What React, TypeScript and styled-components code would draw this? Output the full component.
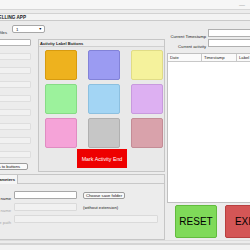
import React from "react";
import styled, { createGlobalStyle } from "styled-components";

const Global = createGlobalStyle`
  html, body { margin: 0; padding: 0; background: #ececec; }
  body { font-family: "Liberation Sans", Arial, sans-serif; }
  * { box-sizing: border-box; }
`;

const Screen = styled.div`
  width: 250px;
  height: 250px;
  overflow: hidden;
  background: #ececec;
  display: flex;
  flex-direction: column;
`;

const TopStrip = styled.div`
  height: 10px;
  flex: none;
  background: #f6f6f6;
  border-bottom: 1px solid #d6d6d6;
  display: flex;
  justify-content: flex-end;
  align-items: center;
  padding-right: 5px;
  color: #9a9a9a;
  font-size: 6px;
  line-height: 6px;
`;

const TitleRow = styled.div`
  margin-top: 3px;
  height: 8px;
  flex: none;
  background: #f3f3f3;
  border-top: 1px solid #d2d2d2;
  border-bottom: 1px solid #cacaca;
  display: flex;
  align-items: center;
  overflow: hidden;
`;

const TitleText = styled.span`
  margin-left: -33px;
  font-size: 4.6px;
  font-weight: bold;
  color: #222;
  white-space: nowrap;
`;

const Window = styled.div`
  margin-left: -40px;
  width: 330px;
  display: flex;
  flex: none;
`;

const LeftCol = styled.div`
  width: 205px;
  display: flex;
  flex-direction: column;
`;

const RightCol = styled.div`
  width: 125px;
  margin-left: 1px;
  display: flex;
  flex-direction: column;
`;

const SmallText = styled.span<{ $muted?: boolean }>`
  font-size: 4.2px;
  color: ${(p) => (p.$muted ? "#a8a8a8" : "#222")};
  white-space: nowrap;
`;

const DropRow = styled.div`
  margin-top: 4px;
  height: 8px;
  display: flex;
  align-items: center;
`;

const DropLabel = styled.div`
  width: 48px;
  text-align: right;
  padding-right: 1px;
`;

const Dropdown = styled.div`
  margin-left: 4px;
  width: 33px;
  height: 8px;
  background: #fff;
  border: 1px solid #a8a8a8;
  border-radius: 2px;
  display: flex;
  align-items: center;
  justify-content: space-between;
  padding: 0 2px 0 3px;
  font-size: 4.4px;
  color: #111;
`;

const Middle = styled.div`
  margin-top: 6px;
  height: 133px;
  display: flex;
`;

const InputsCol = styled.div`
  width: 71px;
  display: flex;
  flex-direction: column;
  align-items: flex-end;
  padding-right: 0;
`;

const Field = styled.div<{ $enabled?: boolean; $w: number }>`
  width: ${(p) => p.$w}px;
  height: 7px;
  flex: none;
  background: ${(p) => (p.$enabled ? "#ffffff" : "#f1f1f1")};
  border: 1px solid ${(p) => (p.$enabled ? "#b4b4b4" : "#dedede")};
  border-radius: 1px;
`;

const FieldStack = styled.div`
  display: flex;
  flex-direction: column;
  gap: 7px;
  align-items: flex-end;
`;

const SmallButton = styled.div`
  height: 7px;
  padding: 0 2px;
  background: #fafafa;
  border: 1px solid #9c9c9c;
  border-radius: 2px;
  display: flex;
  align-items: center;
  justify-content: center;
  font-size: 4.2px;
  color: #111;
  white-space: nowrap;
`;

const AssignButton = styled(SmallButton)`
  margin-top: 5px;
  margin-right: 3px;
  width: 60px;
`;

const LabelFrame = styled.div`
  margin-left: 7px;
  width: 127px;
  height: 133px;
  border: 1px solid #c6c6c6;
  background: #e9e9e9;
  display: flex;
  flex-direction: column;
`;

const FrameHeader = styled.div`
  height: 7px;
  padding-left: 1px;
  display: flex;
  align-items: center;
  border-bottom: 1px solid #d0d0d0;
  background: #ededed;
`;

const FrameTitle = styled.span`
  font-size: 4.1px;
  font-weight: bold;
  color: #222;
`;

const ColorGrid = styled.div`
  margin-top: 3px;
  margin-left: 6px;
  display: grid;
  grid-template-columns: repeat(3, 32px);
  grid-auto-rows: 30px;
  column-gap: 11px;
  row-gap: 4px;
`;

const Swatch = styled.div<{ $c: string; $b: string }>`
  background: ${(p) => p.$c};
  border: 1px solid ${(p) => p.$b};
  border-radius: 2px;
`;

const MarkButton = styled.div`
  margin-top: 1px;
  margin-left: 38px;
  width: 50px;
  height: 19px;
  background: #ee0000;
  display: flex;
  align-items: center;
  justify-content: center;
  color: #fff;
  font-size: 5.3px;
  white-space: nowrap;
`;

const ParamFrame = styled.div`
  margin-top: 2px;
  height: 66px;
  border: 1px solid #c6c6c6;
  display: flex;
  flex-direction: column;
`;

const TabRow = styled.div`
  height: 9px;
  display: flex;
  border-bottom: 1px solid #c8c8c8;
`;

const Tab = styled.div`
  width: 57px;
  height: 9px;
  background: #f6f6f6;
  border-right: 1px solid #c0c0c0;
  display: flex;
  align-items: center;
  justify-content: flex-end;
  padding-right: 2px;
  font-weight: bold;
`;

const ParamBody = styled.div`
  margin-top: 7px;
  display: flex;
  flex-direction: column;
  gap: 4px;
`;

const ParamRow = styled.div`
  height: 8px;
  display: flex;
  align-items: center;
`;

const ParamLabel = styled.div`
  width: 50px;
  text-align: right;
`;

const ParamField = styled.div<{ $enabled?: boolean; $w: number }>`
  margin-left: 3px;
  width: ${(p) => p.$w}px;
  height: 8px;
  background: ${(p) => (p.$enabled ? "#ffffff" : "#f1f1f1")};
  border: 1px solid ${(p) => (p.$enabled ? "#a8a8a8" : "#dadada")};
  border-radius: 1px;
`;

const ParamAside = styled.div`
  margin-left: 6px;
  display: flex;
  align-items: center;
`;

const InfoRow = styled.div<{ $top: number }>`
  margin-top: ${(p) => p.$top}px;
  height: 8px;
  display: flex;
  align-items: center;
`;

const InfoLabel = styled.div`
  width: 40px;
  text-align: right;
`;

const InfoField = styled.div`
  margin-left: 2px;
  flex: 1;
  height: 8px;
  background: #fff;
  border: 1px solid #b0b0b0;
`;

const Table = styled.div`
  margin-top: 6px;
  margin-left: 1px;
  height: 150px;
  background: #fff;
  border: 1px solid #c0c0c0;
  display: flex;
  flex-direction: column;
`;

const TableHead = styled.div`
  height: 8px;
  display: flex;
  border-bottom: 1px solid #c8c8c8;
  background: #fafafa;
`;

const HeadCell = styled.div<{ $w: number }>`
  width: ${(p) => p.$w}px;
  padding-left: 2px;
  border-right: 1px solid #c8c8c8;
  display: flex;
  align-items: center;
`;

const ButtonRow = styled.div`
  margin-top: 2px;
  margin-left: 9px;
  height: 33px;
  display: flex;
  gap: 8px;
`;

const BigButton = styled.div<{ $bg: string; $b: string }>`
  width: 42px;
  height: 33px;
  flex: none;
  background: ${(p) => p.$bg};
  border: 1px solid ${(p) => p.$b};
  border-radius: 2px;
  display: flex;
  align-items: center;
  justify-content: center;
  font-size: 10px;
  color: #000;
`;

const Footer = styled.div`
  flex: 1;
  border-top: 1px solid #dcdcdc;
  margin-top: 0;
  display: flex;
  flex-direction: column;
`;

const FooterLine = styled.div`
  margin-top: 2px;
  height: 2px;
  background: #d4d4d4;
`;

const FooterBase = styled.div`
  flex: 1;
  background: #f2f2f2;
`;

const swatches = [
  ["#eeb21e", "#d79b10"],
  ["#9b9bf2", "#8282d8"],
  ["#f5f29c", "#e0dc86"],
  ["#9cf29c", "#86dc86"],
  ["#a3d5f4", "#8cc0e0"],
  ["#ddb0f2", "#c89ade"],
  ["#f5a3d8", "#e08cc2"],
  ["#c6c6c6", "#b0b0b0"],
  ["#d9a2ab", "#c48c96"],
];

export default function App() {
  return (
    <Screen>
      <Global />
      <TopStrip>—</TopStrip>
      <TitleRow>
        <TitleText>ACTIVITY LABELLING APP</TitleText>
      </TitleRow>
      <Window>
        <LeftCol>
          <DropRow>
            <DropLabel>
              <SmallText>Number of files</SmallText>
            </DropLabel>
            <Dropdown>
              <span>1</span>
              <span style={{ fontSize: "3.6px" }}>▼</span>
            </Dropdown>
          </DropRow>
          <Middle>
            <InputsCol>
              <FieldStack>
                <Field $enabled $w={44} />
                {Array.from({ length: 8 }).map((_, i) => (
                  <Field key={i} $w={44} />
                ))}
              </FieldStack>
              <AssignButton>Assign labels to buttons</AssignButton>
            </InputsCol>
            <LabelFrame>
              <FrameHeader>
                <FrameTitle>Activity Label Buttons</FrameTitle>
              </FrameHeader>
              <ColorGrid>
                {swatches.map(([c, b], i) => (
                  <Swatch key={i} $c={c} $b={b} />
                ))}
              </ColorGrid>
              <MarkButton>Mark Activity End</MarkButton>
            </LabelFrame>
          </Middle>
          <ParamFrame>
            <TabRow>
              <Tab>
                <SmallText>Parameters</SmallText>
              </Tab>
            </TabRow>
            <ParamBody>
              <ParamRow>
                <ParamLabel>
                  <SmallText>File name</SmallText>
                </ParamLabel>
                <ParamField $enabled $w={63} />
                <ParamAside>
                  <SmallButton>Choose save folder</SmallButton>
                </ParamAside>
              </ParamRow>
              <ParamRow>
                <ParamLabel>
                  <SmallText $muted>Sub name</SmallText>
                </ParamLabel>
                <ParamField $w={63} />
                <ParamAside>
                  <SmallText>(without extension)</SmallText>
                </ParamAside>
              </ParamRow>
              <ParamRow>
                <ParamLabel>
                  <SmallText $muted>Save path</SmallText>
                </ParamLabel>
                <ParamField $w={144} />
              </ParamRow>
            </ParamBody>
          </ParamFrame>
        </LeftCol>
        <RightCol>
          <InfoRow $top={8}>
            <InfoLabel>
              <SmallText>Current Timestamp</SmallText>
            </InfoLabel>
            <InfoField />
          </InfoRow>
          <InfoRow $top={2}>
            <InfoLabel>
              <SmallText>Current activity</SmallText>
            </InfoLabel>
            <InfoField />
          </InfoRow>
          <Table>
            <TableHead>
              <HeadCell $w={34}>
                <SmallText>Date</SmallText>
              </HeadCell>
              <HeadCell $w={35}>
                <SmallText>Timestamp</SmallText>
              </HeadCell>
              <HeadCell $w={40}>
                <SmallText>Label</SmallText>
              </HeadCell>
            </TableHead>
          </Table>
          <ButtonRow>
            <BigButton $bg="#7fda59" $b="#62bb3e">RESET</BigButton>
            <BigButton $bg="#d45656" $b="#b84040">EXIT</BigButton>
          </ButtonRow>
        </RightCol>
      </Window>
      <Footer>
        <FooterLine />
        <FooterBase />
      </Footer>
    </Screen>
  );
}
